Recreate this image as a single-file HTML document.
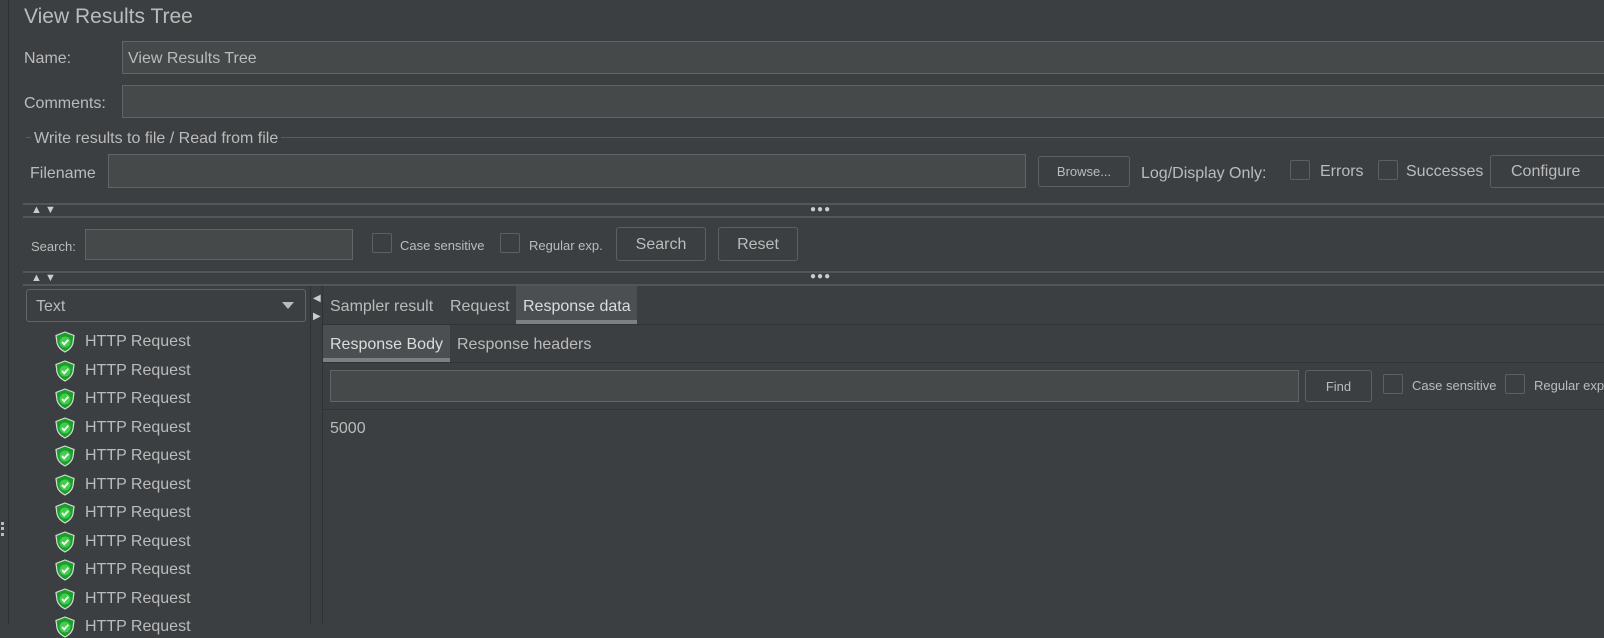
<!DOCTYPE html>
<html><head><meta charset="utf-8"><style>
*{box-sizing:border-box;margin:0;padding:0}
body{width:1604px;height:624px;background:#3c3f41;overflow:hidden;position:relative;font-family:"Liberation Sans",sans-serif;color:#bbbbbb}
.a{position:absolute;white-space:nowrap}
.f{position:absolute;background:#45494a;border:1px solid #646464}
.b{position:absolute;border:1px solid #5e6060;border-radius:3px;background:#3c3f41;text-align:center;color:#bbbbbb}
.c{position:absolute;width:20px;height:20px;border:1px solid #5e6060;border-radius:2px;background:#3c3f41}
.h{position:absolute;height:2px;background:#515658}
.t{font-size:16px}
.s{font-size:13px}
.dots{position:absolute;font-size:10px;letter-spacing:1px;color:#ccc}
</style></head><body>
<div class="a" style="left:8px;top:0;width:1px;height:624px;background:#2e3133"></div>
<div class="a" style="left:1px;top:522px;width:3px;height:14px;border-left:3px dotted #bbb"></div>

<div class="a" style="left:24px;top:5px;font-size:21px">View Results Tree</div>
<div class="a t" style="left:24px;top:50px">Name:</div>
<div class="f" style="left:122px;top:41px;width:1490px;height:33px"></div>
<div class="a t" style="left:128px;top:50px">View Results Tree</div>
<div class="a t" style="left:24px;top:95px">Comments:</div>
<div class="f" style="left:122px;top:85px;width:1490px;height:33px"></div>

<div class="h" style="left:26px;top:137px;width:1580px;height:1px;background:#5a5e60"></div>
<div class="a t" style="left:31px;top:130px;background:#3c3f41;padding:0 3px">Write results to file / Read from file</div>
<div class="a t" style="left:30px;top:165px">Filename</div>
<div class="f" style="left:108px;top:154px;width:918px;height:34px"></div>
<div class="b s" style="left:1038px;top:156px;width:92px;height:31px;line-height:29px">Browse...</div>
<div class="a t" style="left:1141px;top:165px">Log/Display Only:</div>
<div class="c" style="left:1290px;top:160px"></div>
<div class="a t" style="left:1320px;top:163px">Errors</div>
<div class="c" style="left:1378px;top:160px"></div>
<div class="a t" style="left:1406px;top:163px">Successes</div>
<div class="b t" style="left:1490px;top:155px;width:130px;height:33px;line-height:31px;text-align:left;padding-left:20px">Configure</div>

<div class="h" style="left:23px;top:203px;width:1581px"></div>
<div class="h" style="left:23px;top:216px;width:1581px"></div>
<div class="a" style="left:31px;top:204px;font-size:11px;color:#ccc">▲ ▼</div>
<div class="dots" style="left:810px;top:204px">●●●</div>

<div class="a s" style="left:31px;top:239px">Search:</div>
<div class="f" style="left:85px;top:229px;width:268px;height:31px"></div>
<div class="c" style="left:372px;top:233px"></div>
<div class="a s" style="left:400px;top:238px">Case sensitive</div>
<div class="c" style="left:500px;top:233px"></div>
<div class="a s" style="left:529px;top:238px">Regular exp.</div>
<div class="b t" style="left:616px;top:227px;width:90px;height:34px;line-height:34px">Search</div>
<div class="b t" style="left:718px;top:227px;width:80px;height:34px;line-height:34px">Reset</div>

<div class="h" style="left:23px;top:271px;width:1581px"></div>
<div class="h" style="left:23px;top:284px;width:1581px"></div>
<div class="a" style="left:31px;top:272px;font-size:11px;color:#ccc">▲ ▼</div>
<div class="dots" style="left:810px;top:271px">●●●</div>

<div class="a" style="left:310px;top:286px;width:1px;height:338px;background:#2f3234"></div>
<div class="a" style="left:322px;top:286px;width:1px;height:338px;background:#2f3234"></div>
<div class="a" style="left:313px;top:290px;font-size:10px;color:#ccc;line-height:18px">◀<br>▶</div>

<div class="b" style="left:26px;top:289px;width:280px;height:33px;text-align:left;background:#3c3f41;border-color:#646464"></div>
<div class="a t" style="left:36px;top:298px">Text</div>
<div class="a" style="left:282px;top:302px;width:0;height:0;border-left:6px solid transparent;border-right:6px solid transparent;border-top:7px solid #bbb"></div>

<div id="tree"></div>

<div class="a" style="left:516px;top:286px;width:121px;height:38px;background:#4b4f51"></div>
<div class="a" style="left:516px;top:320px;width:121px;height:4px;background:#7b8083"></div>
<div class="a" style="left:323px;top:324px;width:1281px;height:1px;background:#313335"></div>
<div class="a t" style="left:330px;top:298px">Sampler result</div>
<div class="a t" style="left:450px;top:298px">Request</div>
<div class="a t" style="left:523px;top:298px;color:#dcdcdc">Response data</div>

<div class="a" style="left:323px;top:325px;width:127px;height:37px;background:#4b4f51"></div>
<div class="a" style="left:323px;top:358px;width:127px;height:4px;background:#7b8083"></div>
<div class="a" style="left:323px;top:362px;width:1281px;height:1px;background:#313335"></div>
<div class="a t" style="left:330px;top:336px;color:#dcdcdc">Response Body</div>
<div class="a t" style="left:457px;top:336px">Response headers</div>

<div class="f" style="left:330px;top:370px;width:969px;height:32px"></div>
<div class="b s" style="left:1305px;top:370px;width:67px;height:32px;line-height:32px">Find</div>
<div class="c" style="left:1383px;top:374px"></div>
<div class="a s" style="left:1412px;top:378px">Case sensitive</div>
<div class="c" style="left:1505px;top:374px"></div>
<div class="a s" style="left:1534px;top:378px">Regular exp</div>
<div class="a" style="left:323px;top:409px;width:1281px;height:1px;background:#313335"></div>
<div class="a t" style="left:330px;top:420px">5000</div>

<script>
var h='';
for(var i=0;i<11;i++){var y=Math.round(333+i*28.5);
h+='<svg class="a" style="left:54px;top:'+(y-2)+'px" width="22" height="22" viewBox="0 0 22 22"><path d="M11 1 L20 4.5 L19 12 C18 16.5 14 19.5 11 21 C8 19.5 4 16.5 3 12 L2 4.5 Z" fill="#1a9e2a" stroke="#d8dcd8" stroke-width="1.2"/><circle cx="11" cy="11" r="5.5" fill="#3dd14a"/><path d="M8 11 L10.2 13.3 L14.3 8.8" fill="none" stroke="#fff" stroke-width="2"/></svg>';
h+='<div class="a t" style="left:85px;top:'+y+'px">HTTP Request</div>';}
document.getElementById('tree').innerHTML=h;
</script>
</body></html>
